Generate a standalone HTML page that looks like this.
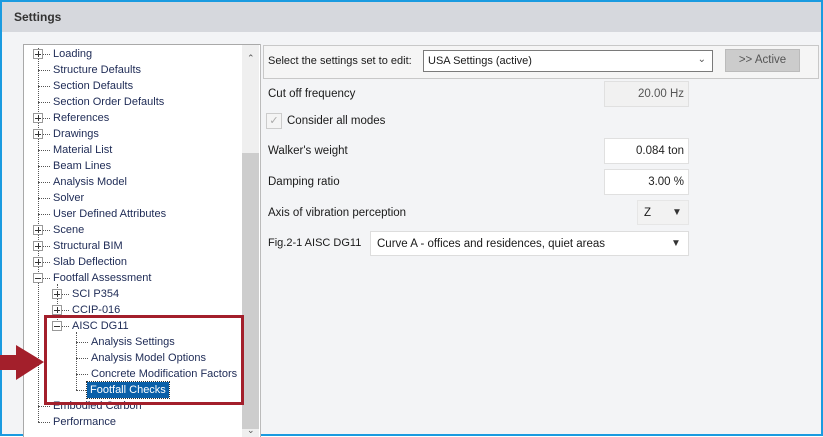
<!DOCTYPE html><html><head><style>
body{margin:0;width:823px;height:436px;overflow:hidden;font-family:"Liberation Sans",sans-serif;}
.win{position:absolute;left:0;top:0;width:819px;height:432px;border:2px solid #1a9be0;background:#f3f4f6;}
.title{position:absolute;left:0;top:0;width:819px;height:30px;background:#d6d8dd;}
.title span{position:absolute;left:12px;top:8px;font-weight:bold;font-size:12px;color:#333;}
.tree{position:absolute;left:21px;top:42px;width:236px;height:392px;border:1px solid #a9a9a9;border-bottom:none;background:#fff;}
.sb{position:absolute;left:218px;top:0;width:17px;height:392px;background:#efefef;}
.thumb{position:absolute;left:0;top:108px;width:17px;height:276px;background:#cdcdcd;}
.t{position:absolute;font-size:11px;color:#1d2a55;white-space:nowrap;line-height:14px;}
.box{position:absolute;width:8px;height:8px;border:1px solid #999;background:#fff;}
.box:before{content:"";position:absolute;left:1px;top:3.5px;width:6px;height:1px;background:#333;}
.box.p:after{content:"";position:absolute;left:3.5px;top:1px;width:1px;height:6px;background:#333;}
.vl{position:absolute;width:0;border-left:1px dotted #555;}
.hl{position:absolute;height:0;border-top:1px dotted #555;}
.r{position:absolute;font-size:11.5px;color:#1a1a1a;white-space:nowrap;}
.inp{position:absolute;background:#fff;border:1px solid #e0e0e0;font-size:11.5px;text-align:right;box-sizing:border-box;padding:6px 4px 0 0;color:#222;}
</style></head><body>
<div class="win">
<div class="title"><span>Settings</span></div>
<div class="tree">
<div class="sb"><div style="position:absolute;left:5px;top:8px;font-size:9px;color:#555">&#8963;</div><div class="thumb"></div><div style="position:absolute;left:5px;top:380px;font-size:9px;color:#555">&#8964;</div></div>
</div>
<div style="position:absolute;left:258px;top:42px;width:1px;height:392px;background:#bbb"></div>
<div style="position:absolute;left:261px;top:43px;width:554px;height:32px;border:1px solid #c8c8c8;background:#f5f5f5"></div>
</div>
<div id="tr"></div>
<script>
var items=[["Loading",1,"p"],["Structure Defaults",1],["Section Defaults",1],["Section Order Defaults",1],["References",1,"p"],["Drawings",1,"p"],["Material List",1],["Beam Lines",1],["Analysis Model",1],["Solver",1],["User Defined Attributes",1],["Scene",1,"p"],["Structural BIM",1,"p"],["Slab Deflection",1,"p"],["Footfall Assessment",1,"m"],["SCI P354",2,"p"],["CCIP-016",2,"p"],["AISC DG11",2,"m"],["Analysis Settings",3],["Analysis Model Options",3],["Concrete Modification Factors",3],["Footfall Checks",3,"s"],["Embodied Carbon",1],["Performance",1]];
var h="";var lx={1:38,2:57,3:76},tx={1:53,2:72,3:91};
h+='<div class="vl" style="left:38px;top:48px;height:374px"></div>';
h+='<div class="vl" style="left:57px;top:284px;height:42px"></div>';
h+='<div class="vl" style="left:76px;top:332px;height:58px"></div>';
items.forEach(function(it,i){var y=54+16*i,l=it[1];
h+='<div class="hl" style="left:'+lx[l]+'px;top:'+y+'px;width:'+(tx[l]-lx[l]-3)+'px"></div>';
if(it[2]=="p"||it[2]=="m")h+='<div class="box '+(it[2]=="p"?"p":"")+'" style="left:'+(lx[l]-5)+'px;top:'+(y-5)+'px"></div>';
if(it[2]=="s")h+='<div class="t" style="left:87px;top:'+(y-8)+'px;background:#0a5fa8;color:#fff;padding:1px 3px;outline:1px dotted #333">'+it[0]+'</div>';
else h+='<div class="t" style="left:'+tx[l]+'px;top:'+(y-7)+'px">'+it[0]+'</div>';});
document.getElementById("tr").innerHTML=h;
</script>
<div style="position:absolute;left:44px;top:315px;width:194px;height:84px;border:3px solid #a31f2b"></div>
<svg style="position:absolute;left:0;top:340px" width="48" height="50"><polygon points="0,15 16,15 16,5 44,22 16,40 16,30 0,30" fill="#a31f2b"/></svg>
<div class="r" style="left:268px;top:55px;font-size:11px">Select the settings set to edit:</div>
<div style="position:absolute;left:423px;top:50px;width:290px;height:22px;border:1px solid #7a7a7a;background:#fff;box-sizing:border-box"><span class="r" style="left:4px;top:4px;font-size:11px">USA Settings (active)</span><span style="position:absolute;right:6px;top:3px;font-size:10px;color:#555">&#8964;</span></div>
<div style="position:absolute;left:725px;top:49px;width:73px;height:21px;background:#ccc;border:1px solid #bbb;font-size:11.5px;color:#555;text-align:center;line-height:21px">&gt;&gt; Active</div>
<div class="r" style="left:268px;top:88px">Cut off frequency</div>
<div class="inp" style="left:604px;top:81px;width:85px;height:26px;background:#f1f1f1;color:#555">20.00 Hz</div>
<div style="position:absolute;left:266px;top:113px;width:14px;height:14px;border:1px solid #ccc;background:#f4f4f4;font-size:11px;color:#aaa;text-align:center;line-height:14px">&#10003;</div>
<div class="r" style="left:287px;top:115px">Consider all modes</div>
<div class="r" style="left:268px;top:145px">Walker's weight</div>
<div class="inp" style="left:604px;top:138px;width:85px;height:26px">0.084 ton</div>
<div class="r" style="left:268px;top:176px">Damping ratio</div>
<div class="inp" style="left:604px;top:169px;width:85px;height:26px">3.00 %</div>
<div class="r" style="left:268px;top:207px">Axis of vibration perception</div>
<div style="position:absolute;left:637px;top:200px;width:52px;height:25px;background:#f2f2f2;border:1px solid #e6e6e6;box-sizing:border-box"><span class="r" style="left:6px;top:6px">Z</span><span style="position:absolute;left:34px;top:6px;font-size:10px;color:#333">&#9660;</span></div>
<div class="r" style="left:268px;top:237px;font-size:11px">Fig.2-1 AISC DG11</div>
<div style="position:absolute;left:370px;top:231px;width:319px;height:25px;background:#fff;border:1px solid #ddd;box-sizing:border-box"><span class="r" style="left:6px;top:6px">Curve A - offices and residences, quiet areas</span><span style="position:absolute;left:300px;top:6px;font-size:10px;color:#333">&#9660;</span></div>
</body></html>
